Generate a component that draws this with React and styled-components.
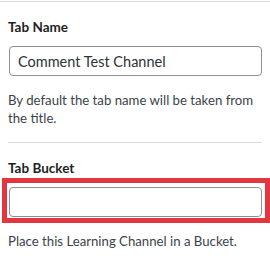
import React from 'react';
import styled, { createGlobalStyle } from 'styled-components';

const GlobalStyle = createGlobalStyle`
  html, body {
    margin: 0;
    padding: 0;
    background: #fff;
  }
  body {
    font-family: Lato, "Liberation Sans", sans-serif;
    color: #1e1e1e;
  }
`;

const Panel = styled.div`
  width: 270px;
  height: 262px;
  box-sizing: border-box;
  border-top: 1px solid #dcdcde;
  margin-top: 1px;
  overflow: hidden;
`;

const Section = styled.div`
  padding: 16px 8px 0 8px;
`;

const Label = styled.div`
  font-size: 13.5px;
  font-weight: 700;
  line-height: 18px;
  color: #1e1e1e;
  margin-bottom: 10px;
`;

const FieldWrap = styled.div`
  position: relative;
  margin-left: 1px;
`;

const Input = styled.input`
  display: block;
  width: 100%;
  height: 30px;
  box-sizing: border-box;
  border: 1px solid #8c8f94;
  border-radius: 4px;
  padding: 0 8px;
  font-family: inherit;
  font-size: 14.5px;
  color: #2c3338;
  background: #fff;
  outline: none;
`;

const Highlight = styled.div`
  position: absolute;
  left: -7px;
  top: -9px;
  right: -8px;
  bottom: -6px;
  border: 5px solid #e0383e;
  pointer-events: none;
`;

const Help = styled.p`
  margin: 15px 0 0 0;
  font-size: 13.2px;
  line-height: 18px;
  color: #3c434a;
`;

const Divider = styled.hr`
  border: 0;
  border-top: 1px solid #dcdcde;
  margin: 15px 0 0 0;
`;

export default function App() {
  return (
    <>
      <GlobalStyle />
      <Panel>
        <Section>
          <Label>Tab Name</Label>
          <FieldWrap>
            <Input defaultValue="Comment Test Channel" />
          </FieldWrap>
          <Help>By default the tab name will be taken from the title.</Help>
          <Divider />
        </Section>
        <Section>
          <Label>Tab Bucket</Label>
          <FieldWrap>
            <Input defaultValue="" />
            <Highlight />
          </FieldWrap>
          <Help>Place this Learning Channel in a Bucket.</Help>
        </Section>
      </Panel>
    </>
  );
}
